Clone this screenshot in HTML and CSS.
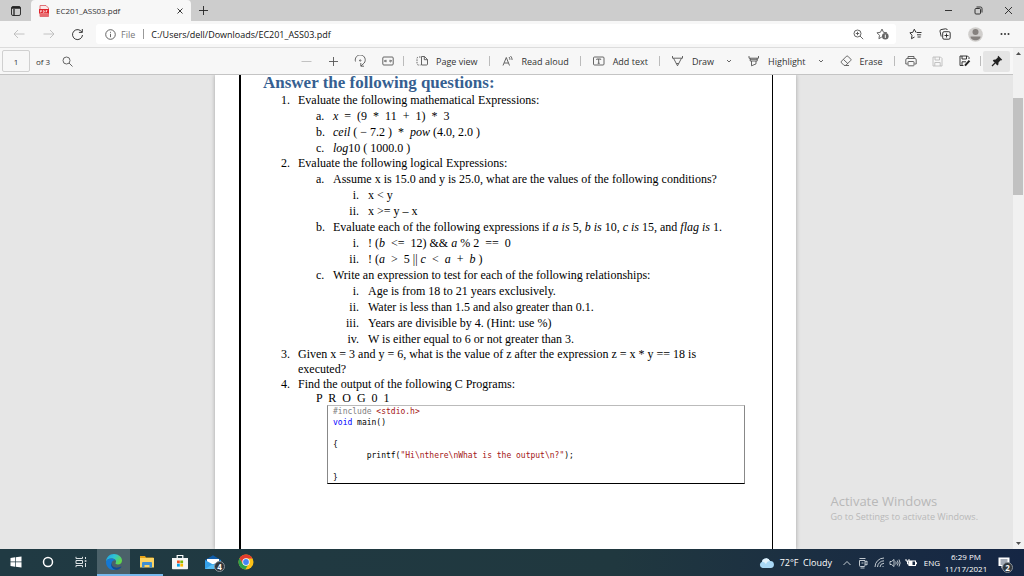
FILE: index.html
```html
<!DOCTYPE html>
<html lang="en">
<head>
  <meta charset="UTF-8">
  <meta name="viewport" content="width=device-width, initial-scale=1.0">
  <title>EC201_ASS03.pdf</title>
  <link rel="stylesheet" href="styles.css">
</head>
<body>
<header class="tabbar">
  <button class="tab-menu" aria-label="Tab actions">
    <svg width="12" height="12" viewBox="0 0 12 12" class="line dark"><rect x="1.5" y="1.5" width="9" height="9" rx="1.5"/><path d="M1.5 3.2h9M2 2.4h8M4 4v6.5" stroke-width="1.3"/></svg>
  </button>
  <div class="tab">
    <svg width="10" height="12" viewBox="0 0 10 12"><path d="M1 .5h6l2.5 2.5v8.5H1z" fill="#fbe9e9" stroke="#d9545a" stroke-width=".8"/><path d="M0 4h10v4.5H0z" fill="#e0252c"/><path d="M1.5 7.5v-2h1v1h-1M4.3 5.5v2h.7c.6 0 .6-2 0-2zM7 7.5v-2h1.3M7 6.5h1" fill="none" stroke="#fff" stroke-width=".6"/><path d="M1 8.5h8.5v3H1z" fill="#e86a6e"/></svg>
    <span class="tab-title">EC201_ASS03.pdf</span>
    <button class="tab-close" aria-label="Close tab">
      <svg width="8" height="8" viewBox="0 0 8 8" class="line dark"><path d="M1.5 1.5l5 5M6.5 1.5l-5 5"/></svg>
    </button>
  </div>
  <button class="new-tab" aria-label="New tab">
    <svg width="11" height="11" viewBox="0 0 11 11" class="line dark"><path d="M5.5 1v9M1 5.5h9"/></svg>
  </button>
  <div class="window-buttons">
    <button aria-label="Minimize"><svg width="9" height="9" viewBox="0 0 9 9" class="line dark"><path d="M1 4.5h7"/></svg></button>
    <button aria-label="Restore"><svg width="9" height="9" viewBox="0 0 9 9" class="line dark"><rect x="1" y="2.5" width="5.5" height="5.5" rx="1"/><path d="M2.5 1h4a1.5 1.5 0 0 1 1.5 1.5v4"/></svg></button>
    <button aria-label="Close"><svg width="9" height="9" viewBox="0 0 9 9" class="line dark"><path d="M1 1l7 7M8 1l-7 7"/></svg></button>
  </div>
</header>

<nav class="addressbar">
  <button class="nav-btn" aria-label="Back"><svg width="12" height="10" viewBox="0 0 12 10" class="line faint"><path d="M11.5 5H1M5 1L1 5l4 4"/></svg></button>
  <button class="nav-btn" aria-label="Forward"><svg width="12" height="10" viewBox="0 0 12 10" class="line faint"><path d="M.5 5H11M7 1l4 4-4 4"/></svg></button>
  <button class="nav-btn refresh" aria-label="Refresh"><svg width="13" height="13" viewBox="0 0 13 13" class="line dark"><path d="M10.9 4.2A5 5 0 1 0 11.5 7M11.3 1v3.4H7.9"/></svg></button>
  <div class="url-box">
    <svg width="11" height="11" viewBox="0 0 11 11" class="line"><circle cx="5.5" cy="5.5" r="4.8"/><path d="M5.5 4.8v3.4M5.5 2.8v1"/></svg>
    <span class="url-scheme">File</span>
    <span class="url-line"></span>
    <input class="url-input" type="text" aria-label="Address" value="C:/Users/dell/Downloads/EC201_ASS03.pdf">
    <button aria-label="Zoom"><svg width="11" height="11" viewBox="0 0 11 11" class="line"><circle cx="4.5" cy="4.5" r="3.5"/><path d="M7 7l3.2 3.2M4.5 2.8v3.4M2.8 4.5h3.4"/></svg></button>
    <button aria-label="Add to favorites"><svg width="13" height="12" viewBox="0 0 13 12"><path d="M5.8 9l-2.9 1.7.6-3.4L1 4.8l3.4-.5L6 1.1l1.5 3.2 3.5.5" class="line"/><circle cx="9.3" cy="8.3" r="3.3" fill="#666"/><path d="M9.3 6.6v3.4" stroke="#fff"/></svg></button>
  </div>
  <button class="side-btn" aria-label="Favorites"><svg width="13" height="12" viewBox="0 0 13 12" class="line dark"><path d="M7.5 4.3h-.6L5.3 1.2 3.9 4.3.9 4.8 3 7.2l-.5 3.5 3-1.7M8 4.5h4.5M8 6.8h4.2M8.5 9h3.2"/></svg></button>
  <button class="side-btn" aria-label="Collections"><svg width="12" height="12" viewBox="0 0 12 12" class="line dark"><rect x="3.7" y="3.7" width="7.5" height="7.5" rx="1.4"/><path d="M7.5 5.5v4M5.5 7.5h4M2.2 8.5L1 3.2Q.8 2 2 1.6L6.5.8Q8 .6 8.3 2"/></svg></button>
  <button class="side-btn" aria-label="Profile"><svg width="15" height="15" viewBox="0 0 15 15"><circle cx="7.5" cy="7.5" r="7.3" fill="#d0cecc"/><circle cx="7.5" cy="5" r="3" fill="#85817e"/><path d="M2.5 9.5h10c0 5-10 5-10 0z" fill="#85817e"/></svg></button>
  <button class="side-btn" aria-label="Settings and more"><svg width="10" height="4" viewBox="0 0 10 4" fill="#333"><circle cx="1.5" cy="2" r="1"/><circle cx="5" cy="2" r="1"/><circle cx="8.5" cy="2" r="1"/></svg></button>
</nav>

<div class="content">
  <div class="pane">
    <div class="toolbar">
      <div class="page-tools">
        <input class="page-input" id="pageNumber" type="text" value="1">
        <label class="page-count" for="pageNumber">of 3</label>
        <button class="tool" aria-label="Search"><svg width="11" height="11" viewBox="0 0 11 11" class="line"><circle cx="4.5" cy="4.5" r="3.5"/><path d="M7 7l3.5 3.5"/></svg></button>
      </div>
      <div class="zoom-tools">
        <button class="tool" aria-label="Zoom out"><svg width="11" height="11" viewBox="0 0 11 11" class="line faint"><path d="M.5 5.5h10"/></svg></button>
        <button class="tool" aria-label="Zoom in"><svg width="11" height="11" viewBox="0 0 11 11" class="line"><path d="M1 5.5h9M5.500 1v9"/></svg></button>
        <button class="tool" aria-label="Rotate"><svg width="13" height="12" viewBox="0 0 13 12" class="line"><path d="M1.500 6.500A5 5 0 1 1 10.200 8L7 11M6.800 8v3.200h3.200"/><circle cx="6.200" cy="5.500" r=".7"/></svg></button>
        <button class="tool" aria-label="Fit to width"><svg width="12" height="10" viewBox="0 0 12 10" class="line"><rect x=".8" y="1" width="10.400" height="8" rx="1"/><path d="M5 5H2.500M3.700 3.800L2.500 5l1.200 1.200M7 5h2.500M8.300 3.800L9.500 5 8.300 6.200"/></svg></button>
      </div>
      <span class="sep"></span>
      <button class="tool-text"><svg width="14" height="12" viewBox="0 0 14 12" class="line"><path d="M5.500 2H3.500A1.500 1.500 0 0 0 2 3.500v5A1.500 1.500 0 0 0 3.500 10h2" stroke-dasharray="1.500 1"/><path d="M6.500 1.500h3L12.500 4.500v4.500q0 1-1 1h-5zM9.300 1.500v3.200h3.200"/></svg>Page view</button>
      <span class="sep"></span>
      <button class="tool-text"><svg width="14" height="12" viewBox="0 0 14 12" class="line"><path d="M2 10.500L5.300 2.500l3.200 8M3.200 8h4.200M8 2q1 1 .9 2.800M9.500 1q1.800 1.800 1.600 4"/></svg>Read aloud</button>
      <span class="sep"></span>
      <button class="tool-text"><svg width="14" height="12" viewBox="0 0 14 12" class="line"><rect x="1.500" y="2" width="10.500" height="8" rx="1"/><path d="M4.700 4.800V4h4v.8M6.700 4v4.300M5.700 8.300h2"/></svg>Add text</button>
      <span class="sep"></span>
      <button class="tool-text split"><svg width="14" height="12" viewBox="0 0 14 12" class="line"><path d="M1.500 1v2.200h10V1M2.500 3.200l4 7.600 4-7.600M5.300 8.500h2.400"/></svg>Draw<svg width="10" height="6" viewBox="0 0 10 6" class="line chevron"><path d="M3 2l2 2 2-2"/></svg></button>
      <button class="tool-text split"><svg width="14" height="12" viewBox="0 0 14 12" class="line"><path d="M2 1v2.200h9.500V1M3.200 3.200V6h7V3.200M4.500 6v4.800l4.500-1.900V6"/><path d="M3 4.300h7.500"/></svg>Highlight<svg width="10" height="6" viewBox="0 0 10 6" class="line chevron"><path d="M3 2l2 2 2-2"/></svg></button>
      <button class="tool-text"><svg width="14" height="12" viewBox="0 0 14 12" class="line"><path d="M2.500 6.200l5-5q.7-.6 1.300 0l3 3q.6.600 0 1.200l-5 5H5L2.500 7.800q-.7-.8 0-1.600zM4.500 4.500l4.400 4.200M6.500 10.500H10"/></svg>Erase</button>
      <span class="sep"></span>
      <div class="file-tools">
        <button class="tool" aria-label="Print"><svg width="12" height="12" viewBox="0 0 12 12" class="line"><path d="M3 3.500V1.500h6v2M2.500 9H.8V4.800q0-1.300 1.300-1.300h7.800q1.300 0 1.300 1.300V9H9.500"/><rect x="3" y="6.500" width="6" height="4.300" rx=".6"/></svg></button>
        <button class="tool" aria-label="Save"><svg width="11" height="11" viewBox="0 0 11 11" class="line faint"><path d="M1 1h7.500L10 2.500V10H1zM3 1v3h4.500V1M2.800 10V6.500h5.400V10"/></svg></button>
        <button class="tool" aria-label="Save as"><svg width="12" height="12" viewBox="0 0 12 12" class="line dark"><path d="M4.500 10.500H1V1h7.500L10 2.500V4M3 1v3h4.500V1M3 10.500V6.800h4"/><path d="M6 10.700l4.500-5" stroke-width="2"/></svg></button>
        <span class="sep"></span>
        <button class="tool pinned" aria-label="Unpin toolbar"><svg width="12" height="12" viewBox="0 0 12 12"><path d="M7.300.8l3.900 3.900-1 .7-.6-.1L7.500 7.500l-.1 2.100-1 .8L1.800 5.700l.8-1 2.100-.1 2.100-2.200-.1-.7z" fill="#222"/><path d="M4 8L1 11" stroke="#222" stroke-width="1.200"/></svg></button>
      </div>
    </div>

    <main class="viewer">
      <article class="page">
        <div class="frame">
          <h1 class="heading">Answer the following questions:</h1>
          <ol class="questions">
            <li><span class="num">1.</span>
              <div>Evaluate the following mathematical Expressions:
                <ol class="parts">
                  <li><span class="num">a.</span><span class="math"><i>x</i>  =  (9  *  11  +  1)  *  3</span></li>
                  <li><span class="num">b.</span><span class="math"><i>ceil</i> ( − 7.2 )  *  <i>pow</i> (4.0, 2.0 )</span></li>
                  <li><span class="num">c.</span><span class="math"><i>log</i>10 ( 1000.0 )</span></li>
                </ol>
              </div>
            </li>
            <li><span class="num">2.</span>
              <div>Evaluate the following logical Expressions:
                <ol class="parts">
                  <li><span class="num">a.</span>
                    <div>Assume x is 15.0 and y is 25.0, what are the values of the following conditions?
                      <ol class="roman">
                        <li><span class="num">i.</span><span>x &lt; y</span></li>
                        <li><span class="num">ii.</span><span>x &gt;= y – x</span></li>
                      </ol>
                    </div>
                  </li>
                  <li><span class="num">b.</span>
                    <div>Evaluate each of the following expressions if <i>a is</i> 5, <i>b is</i> 10, <i>c is</i> 15, and <i>flag is</i> 1.
                      <ol class="roman">
                        <li><span class="num">i.</span><span class="math">! (<i>b</i>  &lt;=  12) &amp;&amp; <i>a</i> % 2  ==  0</span></li>
                        <li><span class="num">ii.</span><span class="math">! (<i>a</i>  &gt;  5 || <i>c</i>  &lt;  <i>a</i>  +  <i>b</i> )</span></li>
                      </ol>
                    </div>
                  </li>
                  <li><span class="num">c.</span>
                    <div>Write an expression to test for each of the following relationships:
                      <ol class="roman">
                        <li><span class="num">i.</span><span>Age is from 18 to 21 years exclusively.</span></li>
                        <li><span class="num">ii.</span><span>Water is less than 1.5 and also greater than 0.1.</span></li>
                        <li><span class="num">iii.</span><span>Years are divisible by 4. (Hint: use %)</span></li>
                        <li><span class="num">iv.</span><span>W is either equal to 6 or not greater than 3.</span></li>
                      </ol>
                    </div>
                  </li>
                </ol>
              </div>
            </li>
            <li><span class="num">3.</span>
              <div>Given x = 3 and y = 6, what is the value of z after the expression z = x * y == 18 is<br>executed?</div>
            </li>
            <li><span class="num">4.</span>
              <div>Find the output of the following C Programs:
                <p class="prog">P  R  O  G  0  1</p>
              </div>
            </li>
          </ol>
<pre class="code"><span class="directive">#include</span> <span class="string">&lt;stdio.h&gt;</span>
<span class="keyword">void</span> main()

{
       printf(<span class="string">"Hi\nthere\nWhat is the output\n?"</span>);

}</pre>
        </div>
      </article>
      <div class="watermark">
        <p class="watermark-title">Activate Windows</p>
        <p>Go to Settings to activate Windows.</p>
      </div>
    </main>
  </div>
  <div class="scrollbar">
    <svg width="11" height="11" viewBox="0 0 11 11"><path d="M3 7l2.500-3L8 7z" fill="#505050"/></svg>
    <div class="track"><div class="thumb"></div></div>
    <svg width="11" height="11" viewBox="0 0 11 11"><path d="M3 4l2.500 3L8 4z" fill="#505050"/></svg>
  </div>
</div>

<footer class="taskbar">
  <button class="app start" aria-label="Start"><svg width="12" height="12" viewBox="0 0 12 12" fill="#fff"><path d="M.5 2L5 1.300v4.300H.5zM5.700 1.200L11.500.4v5.200H5.700zM.5 6.300H5v4.400L.5 10zM5.700 6.300h5.800v5.300l-5.800-.8z"/></svg></button>
  <button class="app" aria-label="Search"><svg width="12" height="12" viewBox="0 0 12 12"><circle cx="6" cy="6" r="4.500" fill="none" stroke="#fff" stroke-width="1.500"/></svg></button>
  <button class="app" aria-label="Task view"><svg width="12" height="12" viewBox="0 0 12 12" fill="none" stroke="#dde3e5"><path d="M1 .8v1.700h6.500V.8M1 11.200V9.500h6.500v1.700M1 4.500h6.500v3H1zM10.500 1v2M10.500 7v4"/><path d="M9.700 5h1.700" stroke-width="1.600"/></svg></button>
  <button class="app open current" aria-label="Microsoft Edge">
    <svg width="18" height="18" viewBox="0 0 18 18">
      <defs>
        <linearGradient id="edgeTop" x1="0" y1="0" x2="1" y2=".5"><stop offset="0" stop-color="#1b9ee8"/><stop offset=".5" stop-color="#2fc3d6"/><stop offset="1" stop-color="#62d84a"/></linearGradient>
      </defs>
      <path d="M1 9C1 4.500 4.500 1 9 1s8 3 8 6.500c0 2.500-1.800 4-4 4-1.700 0-2.800-.6-2.500-1.400C12.300 7.500 9.500 5.500 6.500 5.500 3.500 5.500 1.300 7.300 1 9z" fill="url(#edgeTop)"/>
      <path d="M1 9c.2-2 2.300-3.500 5.500-3.500 1.800 0 3.300.7 4 1.800-2-.6-4 1-4 3.700 0 3.200 2.500 5.500 5 5.600C6 18.300 1 14.500 1 9z" fill="#1478d4"/>
      <path d="M6.700 9.500c-.8 4 3.300 5.700 6.300 5 1.300-.3 2.400-.9 3-1.100.4-.1.600.2.300.6-1 1.300-2.600 2.500-4.600 2.700-3.500.2-7-3.200-5-7.200z" fill="#124a94"/>
    </svg>
  </button>
  <button class="app open" aria-label="File Explorer"><svg width="16" height="14" viewBox="0 0 16 14"><path d="M1 1h5l1 1.500h7.500V5H1z" fill="#e8a317"/><path d="M1 3h14v9.500H1z" fill="#fcd462"/><path d="M3 12.500V8q0-1 1-1h8q1 0 1 1v4.500h-2.500V10h-5v2.500z" fill="#3f8fd2"/></svg></button>
  <button class="app" aria-label="Microsoft Store"><svg width="16" height="16" viewBox="0 0 16 16"><path d="M5.200 4.500V1.500h5.600v3" fill="none" stroke="#fff" stroke-width="1.200"/><path d="M0 4h16v10.500q0 .7-.7.700H.7q-.7 0-.7-.7z" fill="#f5f5f5"/><path d="M5 6.500h2.800v2.800H5z" fill="#f25022"/><path d="M8.300 6.500h2.800v2.800H8.300z" fill="#7fba00"/><path d="M5 9.800h2.800v2.800H5z" fill="#00a4ef"/><path d="M8.300 9.800h2.800v2.800H8.300z" fill="#ffb900"/></svg></button>
  <button class="app" aria-label="Mail"><svg width="18" height="14" viewBox="0 0 18 14"><path d="M1 5l8-4.800L17 5v9H1z" fill="#0f5ca8"/><path d="M3 4h12v5H3z" fill="#fff"/><path d="M1 5l8 4.500L17 5v9H1z" fill="#34a0e8"/><path d="M1 14l8-5 8 5z" fill="#55bdf5"/></svg><span class="badge">4</span></button>
  <button class="app" aria-label="Google Chrome"><svg width="16" height="16" viewBox="0 0 16 16"><circle cx="8" cy="8" r="7.500" fill="#fbc116"/><path d="M1.500 4.250A7.500 7.500 0 0 1 14.500 4.500H8L4.750 9.900z" fill="#e33b2e"/><path d="M1.500 4.250L4.750 9.900 8 11.500l2-.5-2.700 4.500A7.500 7.500 0 0 1 1.500 4.250z" fill="#2ba24c"/><circle cx="8" cy="8" r="3.700" fill="#fff"/><circle cx="8" cy="8" r="2.900" fill="#4285f4"/></svg></button>

  <div class="tray">
    <button class="weather"><svg width="15" height="12" viewBox="0 0 15 12"><path d="M3.500 11A3.300 3.300 0 0 1 3 4.700 4.200 4.200 0 0 1 11 4a3.500 3.500 0 0 1 .8 7z" fill="#a9d8f5"/><path d="M3 4.700A4.200 4.200 0 0 1 11 4Q8 4 7 7 5 4.500 3 4.700z" fill="#e4f4fd"/></svg>72°F&nbsp; Cloudy</button>
    <button class="tray-btn" aria-label="Show hidden icons"><svg width="10" height="8" viewBox="0 0 10 8" class="line light"><path d="M1.500 6L5 2.500 8.500 6"/></svg></button>
    <button class="tray-btn" aria-label="Meet Now"><svg width="10" height="12" viewBox="0 0 10 12" class="line light"><path d="M1.500 1.500h6M1.500 3.500H7V8.500q0 1-1 1H2.500q-1 0-1-1zM7 5l2-1v4L7 7M2.500 11h4M3.500 6h2"/></svg></button>
    <button class="tray-btn" aria-label="Network"><svg width="11" height="11" viewBox="0 0 11 11" class="line light"><path d="M1 10A9 9 0 0 1 10 1M3.500 10A6.500 6.500 0 0 1 10 3.800M6 10a4 4 0 0 1 4-3.700M8.500 9.500h1"/></svg></button>
    <button class="tray-btn" aria-label="Volume"><svg width="12" height="10" viewBox="0 0 12 10" class="line light"><path d="M1 3.500h1.500L5 1.500v7l-2.500-2H1zM6.700 3.500q1 1.500 0 3M8.300 2.500q1.700 2.500 0 5M10 1.500q2.200 3.500 0 7"/></svg></button>
    <button class="tray-btn" aria-label="Battery"><svg width="12" height="10" viewBox="0 0 12 10"><path d="M1 1v2h3V1M2.500 3v3H4" fill="none" stroke="#fff"/><rect x="4" y="3" width="6.500" height="4.500" fill="none" stroke="#fff"/><path d="M4 3h3.500v4.500H4zM11 4.200h1v2h-1z" fill="#fff"/></svg></button>
    <button class="lang">ENG</button>
    <button class="clock"><span>6:29 PM</span><span>11/17/2021</span></button>
    <button class="notify" aria-label="Notifications"><svg width="12" height="12" viewBox="0 0 12 12"><path d="M.5.500h11v8.500H6l-2.500 2.500V9h-3z" fill="#fff"/><path d="M2.500 3h7M2.500 5h7M2.500 7h4" stroke="#1b2f4c" stroke-width=".8"/></svg><span class="badge">2</span></button>
  </div>
</footer>
</body>
</html>
```
FILE: styles.css
```css
* {
  margin: 0;
  padding: 0;
  box-sizing: border-box;
}

body {
  font-family: 'Open Sans', 'Noto Sans', sans-serif;
  font-size: 9px;
  color: #333;
  height: 100vh;
  display: flex;
  flex-direction: column;
  overflow: hidden;
}

button {
  display: flex;
  align-items: center;
  justify-content: center;
  flex-shrink: 0;
  border: none;
  background: none;
  font: inherit;
  color: inherit;
  white-space: nowrap;
  cursor: pointer;
}

input {
  border: none;
  background: none;
  font: inherit;
  color: inherit;
  outline: none;
}

svg {
  display: block;
  flex-shrink: 0;
}

.line {
  fill: none;
  stroke: #555;
  stroke-width: 0.9;
}

.line.dark {
  stroke: #222;
}

.line.faint {
  stroke: #bbb;
}

.line.light {
  stroke: #d5dbe0;
}

/* Tabs */
.tabbar {
  display: flex;
  flex-shrink: 0;
  height: 21px;
  background: #cdcdcd;
}

.tab-menu {
  width: 31px;
}

.tab {
  display: flex;
  align-items: center;
  width: 160px;
  padding: 0 4px 0 8px;
  background: #f7f7f7;
  border-radius: 4px 4px 0 0;
}

.tab-title {
  flex: 1;
  margin-left: 7px;
  font-size: 8px;
}

.tab-close {
  width: 14px;
  height: 14px;
}

.new-tab {
  width: 24px;
}

.window-buttons {
  display: flex;
  margin-left: auto;
  padding-right: 1px;
}

.window-buttons button {
  width: 30px;
}

/* Address bar */
.addressbar {
  display: flex;
  align-items: center;
  flex-shrink: 0;
  height: 27px;
  padding: 0 4px;
  background: #f7f7f7;
  border-bottom: 1px solid #dcdcdc;
}

.nav-btn,
.side-btn {
  width: 30px;
  height: 20px;
}

.refresh {
  width: 26px;
}

.url-box {
  display: flex;
  align-items: center;
  flex: 1;
  height: 20px;
  margin: 0 4px 0 6px;
  padding: 0 2px 0 9px;
  background: #fff;
  border-radius: 3px;
}

.url-scheme {
  margin-left: 5px;
  color: #777;
}

.url-line {
  width: 1px;
  height: 10px;
  margin: 0 7px 0 8px;
  background: #999;
}

.url-input {
  flex: 1;
  min-width: 0;
  color: #111;
}

.url-box button {
  width: 24px;
}

/* PDF pane */
.content {
  display: flex;
  flex: 1;
  min-height: 0;
}

.pane {
  display: flex;
  flex-direction: column;
  flex: 1;
  min-width: 0;
}

.toolbar {
  display: flex;
  align-items: center;
  flex-shrink: 0;
  height: 27px;
  padding-right: 3px;
  background: #f7f7f7;
  border-bottom: 1px solid #c4c4c4;
}

.page-tools {
  display: flex;
  align-items: center;
  width: 293px;
  padding-left: 2px;
}

.page-input {
  width: 28px;
  height: 22px;
  border: 1px solid #d0d0d0;
  border-radius: 2px;
  text-align: center;
  font-size: 8px;
}

.page-count {
  margin: 0 4px 0 6px;
  font-size: 8px;
}

.zoom-tools {
  display: flex;
  padding-right: 2px;
}

.tool {
  width: 27px;
  height: 21px;
}

.tool-text {
  gap: 7px;
  padding: 0 11px;
}

.tool-text.split {
  padding-right: 2px;
}

.chevron {
  margin-left: 3px;
}

.sep {
  width: 1px;
  height: 10px;
  background: #bbb;
}

.file-tools {
  display: flex;
  align-items: center;
  margin-left: auto;
}

.file-tools .sep {
  margin: 0 2px;
}

.pinned {
  background: #e5e5e5;
  border-radius: 2px;
}

.viewer {
  position: relative;
  display: flex;
  justify-content: center;
  flex: 1;
  min-height: 0;
  overflow: hidden;
  background: #e6e6e6;
}

.page {
  display: flex;
  flex: 0 1 581px;
  margin-right: 2px;
  padding: 0 23px 0 24px;
  background: #fff;
  box-shadow: 0 0 4px rgba(0, 0, 0, 0.3);
}

.frame {
  flex: 1;
  padding: 0 27px 0 22px;
  border: solid #000;
  border-width: 0 1px 0 2px;
  font-family: 'Liberation Serif', serif;
  font-size: 12px;
  color: #000;
}

.heading {
  margin-bottom: 3px;
  font-size: 17px;
  line-height: 15px;
  color: #365f91;
}

.questions {
  padding-left: 18px;
  line-height: 15px;
  list-style: none;
}

.questions ol {
  list-style: none;
}

.questions li {
  display: flex;
}

.num {
  flex-shrink: 0;
  width: 17px;
}

.parts {
  padding-left: 18px;
  line-height: 16px;
}

.roman .num {
  width: 35px;
  padding-right: 9px;
  text-align: right;
}

.math {
  white-space: pre;
}

.prog {
  padding-left: 18px;
  line-height: 13px;
  white-space: pre;
}

.code {
  margin-left: 64px;
  padding-left: 5px;
  border: 1px solid #888;
  border-top-color: #bbb;
  border-bottom-color: #000;
  font-family: 'DejaVu Sans Mono', monospace;
  font-size: 8px;
  line-height: 11px;
}

.directive {
  color: #808080;
}

.string {
  color: #a31515;
}

.keyword {
  color: #0000ff;
}

.watermark {
  position: absolute;
  right: 35px;
  bottom: 25px;
  color: #b8b8b8;
  line-height: 14px;
}

.watermark-title {
  font-size: 13px;
  line-height: 18px;
}

.scrollbar {
  display: flex;
  flex-direction: column;
  width: 11px;
  background: #f1f1f1;
}

.track {
  flex: 1;
  padding: 39px 1px 0 0;
}

.thumb {
  height: 97px;
  background: #c1c1c1;
}

/* Taskbar */
.taskbar {
  display: flex;
  flex-shrink: 0;
  height: 27px;
  background: linear-gradient(90deg, #203a43 0%, #20383f 60%, #1b2e42 80%, #152644 100%);
  color: #fff;
}

.app {
  position: relative;
  width: 33px;
  border-bottom: 2px solid transparent;
}

.app.start {
  width: 31px;
}

.app.open {
  border-color: #76b9ed;
}

.app.current {
  background-color: #4b6169;
}

.badge {
  position: absolute;
  right: 4px;
  bottom: 2px;
  width: 11px;
  height: 11px;
  border: 1px solid #8a9299;
  border-radius: 50%;
  background: #30373d;
  font-size: 8px;
  font-weight: 700;
  line-height: 9px;
  text-align: center;
}

.tray {
  display: flex;
  margin-left: auto;
  padding-right: 4px;
}

.weather {
  gap: 6px;
  margin-right: 7px;
}

.tray-btn {
  width: 16px;
}

.lang {
  width: 26px;
  font-size: 8px;
}

.clock {
  flex-direction: column;
  width: 42px;
  font-size: 8px;
  line-height: 12px;
}

.notify {
  position: relative;
  width: 33px;
}

.notify .badge {
  right: 7px;
  bottom: 3px;
}
```
